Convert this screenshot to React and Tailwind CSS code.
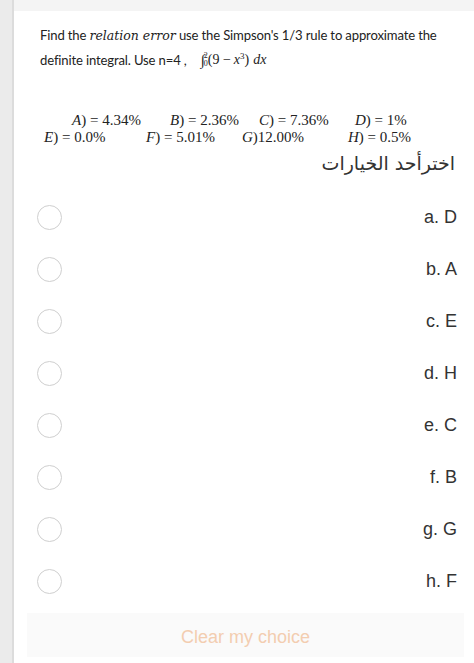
import { useState } from 'react'

const options = [
  { key: 'a', label: 'D' },
  { key: 'b', label: 'A' },
  { key: 'c', label: 'E' },
  { key: 'd', label: 'H' },
  { key: 'e', label: 'C' },
  { key: 'f', label: 'B' },
  { key: 'g', label: 'G' },
  { key: 'h', label: 'F' },
]

function Term({ letter, rest, className }) {
  return (
    <span className={className}>
      <i>{letter}</i>
      {rest}
    </span>
  )
}

export default function App() {
  const [choice, setChoice] = useState(null)

  return (
    <div className="h-[663px] w-[474px] flex bg-white overflow-hidden">
      {/* left gutter */}
      <div className="w-[14px] shrink-0 bg-[#ebebeb] border-r-2 border-[#dcdcdc]" />

      <div className="flex-1 flex flex-col">
        {/* top band */}
        <div className="h-[11px] bg-[#f4f4f4]" />

        <div className="flex-1 flex flex-col pl-[26px] pr-[17px]">
          {/* question */}
          <div className="pt-[12px] text-[13.1px] leading-[24px] text-[#222] font-['Lato',sans-serif] tracking-[-0.15px]">
            <p>
              Find the{' '}
              <i className="font-['DejaVu_Serif',serif] text-[12.5px] tracking-[0px]">relation error</i> use the
              Simpson's 1/3 rule to approximate the
            </p>
            <p className="flex items-center">
              <span>definite integral. Use n=4 ,</span>
              <span className="ml-[14px] font-['Liberation_Serif',serif] text-[14px] tracking-[0px] flex items-center">
                <span className="inline-flex items-center">
                  <span className="text-[15px]">∫</span>
                  <span className="flex flex-col text-[8px] leading-[8px] -ml-[1px]">
                    <span>2</span>
                    <span>0</span>
                  </span>
                </span>
                <span>(9 − </span>
                <i className="ml-[3px]">x</i>
                <sup className="text-[9px]">3</sup>
                <span>)</span>
                <i className="ml-[4px]">dx</i>
              </span>
            </p>
          </div>

          {/* answer table */}
          <div className="mt-[40px] font-['Liberation_Serif',serif] text-[15px] leading-[17px] text-[#222]">
            <div className="flex pl-[32px]">
              <Term className="w-[98px]" letter="A" rest=") = 4.34%" />
              <Term className="w-[89px]" letter="B" rest=") = 2.36%" />
              <Term className="w-[96px]" letter="C" rest=") = 7.36%" />
              <Term letter="D" rest=") = 1%" />
            </div>
            <div className="flex pl-[4px]">
              <Term className="w-[102px]" letter="E" rest=") = 0.0%" />
              <Term className="w-[96px]" letter="F" rest=") = 5.01%" />
              <Term className="w-[106px]" letter="G" rest=")12.00%" />
              <Term letter="H" rest=") = 0.5%" />
            </div>
          </div>

          <p
            dir="rtl"
            className="mt-[2px] pr-[2px] text-right text-[19px] leading-[30px] text-[#333] font-['DejaVu_Sans',sans-serif]"
          >
            اخترأحد الخيارات
          </p>

          {/* options */}
          <div className="mt-[13px] flex flex-col">
            {options.map((o) => (
              <label
                key={o.key}
                className="h-[52px] flex items-center justify-between cursor-pointer"
                onClick={() => setChoice(o.key)}
              >
                <span
                  className={`ml-[-3px] w-[25px] h-[25px] rounded-full border-[1.5px] border-[#cfcfcf] flex items-center justify-center ${
                    choice === o.key ? 'border-[#0f6cbf]' : ''
                  }`}
                >
                  {choice === o.key && <span className="w-[11px] h-[11px] rounded-full bg-[#0f6cbf]" />}
                </span>
                <span className="text-[18px] text-[#333] font-['Liberation_Sans',sans-serif]">
                  {o.key}. {o.label}
                </span>
              </label>
            ))}
          </div>

          {/* clear */}
          <button
            className="mt-[6px] ml-[-13px] mr-[-7px] h-[44px] pt-[4px] bg-[#fafafa] text-[18px] text-[#f3cdb0] font-['Liberation_Sans',sans-serif]"
            onClick={() => setChoice(null)}
          >
            Clear my choice
          </button>
        </div>
      </div>
    </div>
  )
}
